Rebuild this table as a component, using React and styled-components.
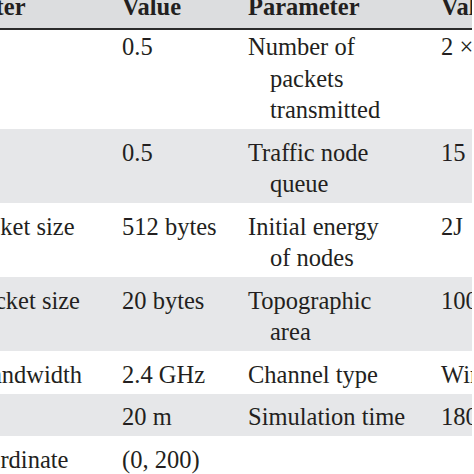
import styled, { createGlobalStyle } from "styled-components";

const GlobalStyle = createGlobalStyle`
  html, body {
    margin: 0;
    padding: 0;
    background: #ffffff;
  }
`;

const rows = [
  { name: "α", value: "0.5", param: ["Number of", "packets", "transmitted"], val: <>2 × 10<sup>4</sup></> },
  { name: "β", value: "0.5", param: ["Traffic node", "queue"], val: "15" },
  { name: "Data packet size", value: "512 bytes", param: ["Initial energy", "of nodes"], val: "2J" },
  { name: "ACK packet size", value: "20 bytes", param: ["Topographic", "area"], val: "100 m × 100 m" },
  { name: "Radio bandwidth", value: "2.4 GHz", param: ["Channel type"], val: "Wireless" },
  { name: "Range", value: "20 m", param: ["Simulation time"], val: "180 s" },
  { name: "Sink coordinate", value: "(0, 200)", param: [""], val: "" },
];

export default function App() {
  return (
    <>
      <GlobalStyle />
      <Frame>
        <Table>
          <HeadRow>
            <Cell>Parameter</Cell>
            <Cell>Value</Cell>
            <Cell>Parameter</Cell>
            <Cell>Value</Cell>
          </HeadRow>
          {rows.map((r, i) => (
            <Row key={i} $striped={i % 2 === 1} $first={i === 0}>
              <Cell>{r.name}</Cell>
              <Cell>{r.value}</Cell>
              <Cell>
                {r.param.map((line, j) => (
                  <Line key={j} $hang={j > 0}>
                    {line}
                  </Line>
                ))}
              </Cell>
              <Cell>{r.val}</Cell>
            </Row>
          ))}
        </Table>
      </Frame>
    </>
  );
}

const Frame = styled.div`
  width: 472px;
  height: 474px;
  overflow: hidden;
  background: #ffffff;
`;

const Table = styled.div`
  width: 726px;
  margin-left: -96px;
  margin-top: -13px;
  font-family: "Liberation Serif", "Times New Roman", serif;
  font-size: 24.5px;
  line-height: 31.5px;
  color: #231f20;
`;

const HeadRow = styled.div`
  display: grid;
  grid-template-columns: 208px 126px 193px 200px;
  padding: 4px 0 5px;
  background: #dcdddf;
  border-bottom: 2px solid #2b2b2b;
  font-weight: 700;
`;

const Row = styled.div`
  display: grid;
  grid-template-columns: 208px 126px 193px 200px;
  padding: ${({ $first }) => ($first ? "1.5px" : "7.5px")} 0 3.5px;
  background: ${({ $striped }) => ($striped ? "#e6e7e9" : "#ffffff")};
`;

const Cell = styled.div`
  padding-left: 10px;
  white-space: nowrap;

  sup {
    font-size: 0.65em;
    line-height: 0;
  }
`;

const Line = styled.div`
  padding-left: ${({ $hang }) => ($hang ? "22px" : "0")};
  min-height: 31.5px;
`;
